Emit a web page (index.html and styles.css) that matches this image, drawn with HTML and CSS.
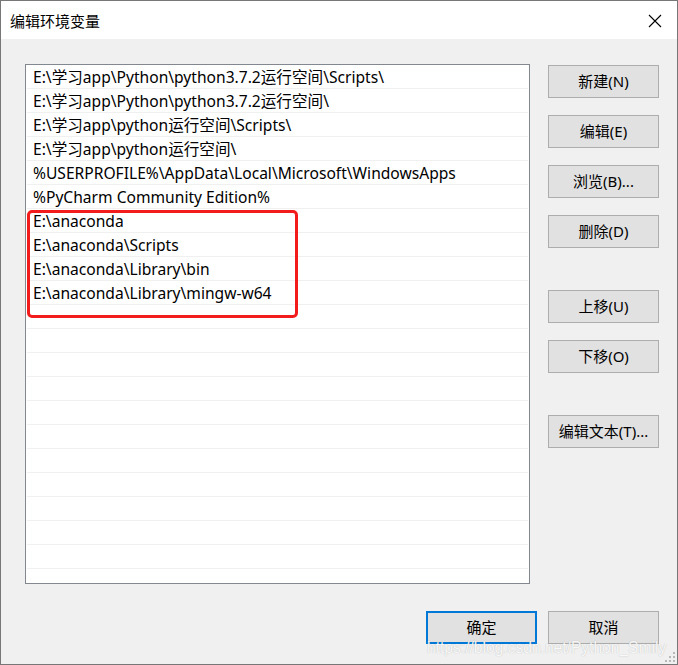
FILE: index.html
```html
<!DOCTYPE html>
<html lang="zh">
<head>
<meta charset="utf-8">
<title>编辑环境变量</title>
<link rel="stylesheet" href="styles.css">
</head>
<body>
<div class="dialog">
  <div class="titlebar">
    <span class="title">编辑环境变量</span>
    <svg class="close" width="14" height="14" viewBox="0 0 14 14"><path d="M1 1 L13 13 M13 1 L1 13" stroke="#000" stroke-width="1.1" fill="none"/></svg>
  </div>
  <div class="body">
    <div class="main">
      <div class="list">
        <div class="row">E:\学习app\Python\python3.7.2运行空间\Scripts\</div>
        <div class="row">E:\学习app\Python\python3.7.2运行空间\</div>
        <div class="row">E:\学习app\python运行空间\Scripts\</div>
        <div class="row">E:\学习app\python运行空间\</div>
        <div class="row">%USERPROFILE%\AppData\Local\Microsoft\WindowsApps</div>
        <div class="row">%PyCharm Community Edition%</div>
        <div class="row">E:\anaconda</div>
        <div class="row">E:\anaconda\Scripts</div>
        <div class="row">E:\anaconda\Library\bin</div>
        <div class="row">E:\anaconda\Library\mingw-w64</div>
        <div class="row"></div>
        <div class="row"></div>
        <div class="row"></div>
        <div class="row"></div>
        <div class="row"></div>
        <div class="row"></div>
        <div class="row"></div>
        <div class="row"></div>
        <div class="row"></div>
        <div class="row"></div>
        <div class="row"></div>
        <div class="highlight"></div>
      </div>
      <div class="side">
        <div class="group">
          <button class="btn">新建(N)</button>
          <button class="btn">编辑(E)</button>
          <button class="btn">浏览(B)...</button>
          <button class="btn">删除(D)</button>
        </div>
        <div class="group">
          <button class="btn">上移(U)</button>
          <button class="btn">下移(O)</button>
        </div>
        <div class="group">
          <button class="btn">编辑文本(T)...</button>
        </div>
      </div>
    </div>
    <div class="footer">
      <button class="btn primary">确定</button>
      <button class="btn">取消</button>
    </div>
    <div class="watermark">https://blog.csdn.net/Python_Smily</div>
    <svg class="grip" width="10" height="10" viewBox="0 0 10 10">
      <rect x="8" y="0" width="2" height="2" fill="#b8b8b8"/>
      <rect x="4" y="4" width="2" height="2" fill="#b8b8b8"/>
      <rect x="8" y="4" width="2" height="2" fill="#b8b8b8"/>
      <rect x="0" y="8" width="2" height="2" fill="#b8b8b8"/>
      <rect x="4" y="8" width="2" height="2" fill="#b8b8b8"/>
      <rect x="8" y="8" width="2" height="2" fill="#b8b8b8"/>
    </svg>
  </div>
</div>
</body>
</html>
```

FILE: styles.css
```css
* { box-sizing: border-box; }
html, body { margin: 0; padding: 0; }
body {
  width: 678px;
  height: 665px;
  font-family: "Noto Sans", "Noto Sans CJK SC", sans-serif;
  font-size: 15px;
  color: #000;
  background: #fff;
}
.dialog {
  width: 678px;
  height: 665px;
  border: 1px solid #777;
  display: flex;
  flex-direction: column;
}
.titlebar {
  height: 38px;
  background: #fff;
  display: flex;
  align-items: center;
  justify-content: space-between;
  padding: 0 15px 0 9px;
  flex: none;
}
.title {
  font-family: "Noto Sans CJK SC", sans-serif;
  font-size: 15px;
}
.close { position: relative; top: 1px; }
.body {
  flex: 1;
  background: #f0f0f0;
  padding: 25px 18px 0 24px;
  position: relative;
}
.main {
  display: flex;
  gap: 18px;
}
.list {
  width: 505px;
  height: 520px;
  background: #fff;
  border: 1px solid #828790;
  padding: 0 1px;
  position: relative;
}
.row {
  height: 24px;
  border-bottom: 1px solid #f0f0f0;
  padding-left: 6px;
  padding-top: 2px;
  line-height: 21px;
  font-size: 15.6px;
  white-space: nowrap;
  overflow: hidden;
}
.highlight {
  position: absolute;
  left: 1px;
  top: 145px;
  width: 271px;
  height: 108px;
  border: 3px solid #f21c1c;
  border-radius: 5px;
}
.side {
  display: flex;
  flex-direction: column;
  padding-top: 1px;
  gap: 42px;
}
.group {
  display: flex;
  flex-direction: column;
  gap: 17px;
}
.btn {
  width: 111px;
  height: 33px;
  background: #e1e1e1;
  border: 1px solid #adadad;
  font-family: "Noto Sans", "Noto Sans CJK SC", sans-serif;
  font-size: 15px;
  color: #000;
  padding: 0 0 2px;
  margin: 0;
}
.btn.primary {
  border: 2px solid #0078d7;
}
.footer {
  display: flex;
  justify-content: flex-end;
  gap: 11px;
  margin-top: 27px;
}
.watermark {
  position: absolute;
  left: 426px;
  top: 600px;
  font-family: "Liberation Sans", sans-serif;
  font-size: 15.6px;
  color: rgba(255,255,255,0.92);
  text-shadow: 0 0 1px rgba(120,120,120,0.55);
  white-space: nowrap;
}
.grip {
  position: absolute;
  right: 2px;
  bottom: 2px;
}
```
